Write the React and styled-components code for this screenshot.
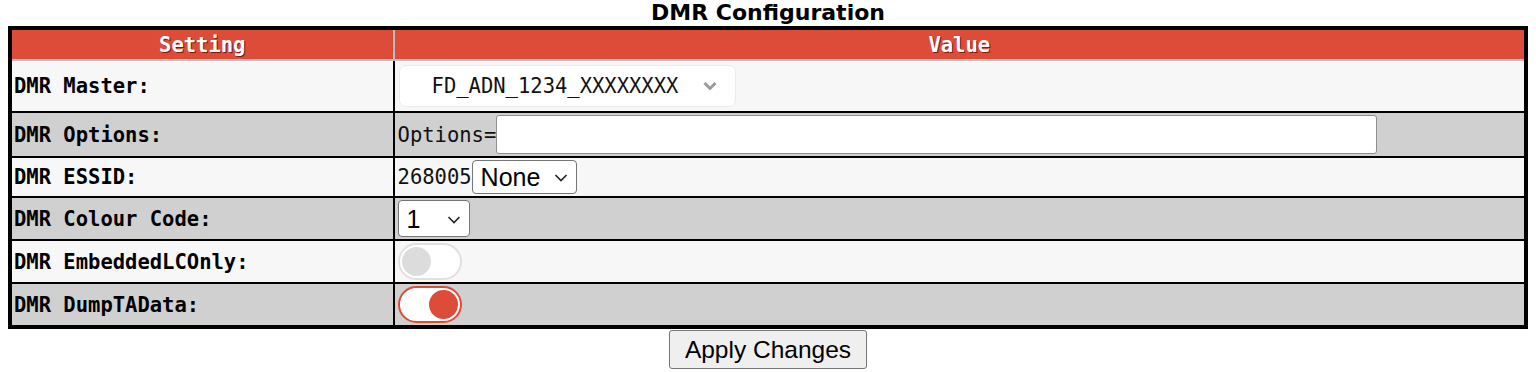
import React, { useState } from 'react';
import styled, { createGlobalStyle } from 'styled-components';

const GlobalStyle = createGlobalStyle`
  body {
    margin: 0 8px;
    background: #fff;
    font-family: "DejaVu Sans Mono", monospace;
  }
`;

const Title = styled.div`
  font-family: "DejaVu Sans", Verdana, sans-serif;
  font-weight: bold;
  font-size: 22px;
  line-height: 26px;
  text-align: center;
  color: #000;
`;

const Table = styled.table`
  width: 100%;
  border-collapse: collapse;
  border: 4px solid #000;
  font-size: 20.5px;
  line-height: 24px;
`;

const HeadCell = styled.th`
  background: #dd4b39;
  color: #fff;
  font-weight: bold;
  text-shadow: 1px 1px #7a1a10;
  border: 2px solid #c0c0c0;
  height: 29px;
  padding: 0;
  width: ${({ $w }) => $w || 'auto'};
`;

const Row = styled.tr`
  background: ${({ $dark }) => ($dark ? '#d0d0d0' : '#f7f7f7')};
`;

const Label = styled.td`
  border: 2px solid #000;
  font-weight: bold;
  padding: 0 2px;
  white-space: nowrap;
`;

const Value = styled.td`
  border: 2px solid #000;
  padding: 2px 2px 2px 3px;
  vertical-align: middle;
`;

const Inline = styled.div`
  display: flex;
  align-items: center;
`;

const FancySelect = styled.div`
  width: 337px;
  height: 42px;
  margin: 2px 0 2px 1px;
  box-sizing: border-box;
  background: #fff;
  border: 1px solid #ececec;
  border-radius: 7px;
  display: flex;
  align-items: center;
  padding-left: 32px;
  padding-right: 16px;
  justify-content: space-between;
  color: #111;
`;

const Chevron = styled.svg`
  width: 18px;
  height: 18px;
`;

const TextInput = styled.input`
  width: 881px;
  height: 39px;
  box-sizing: border-box;
  border: 1px solid #8f8f8f;
  border-radius: 3px;
  background: #fff;
  font-size: 18px;
  padding: 0 4px;
  margin: 0;
`;

const SelectWrap = styled.div`
  position: relative;
  display: inline-block;
  vertical-align: middle;
`;

const NativeSelect = styled.select`
  appearance: none;
  display: block;
  font-family: "Liberation Sans", Arial, sans-serif;
  font-size: 25px;
  height: ${({ $h }) => $h}px;
  width: ${({ $w }) => $w}px;
  border: 1px solid #767676;
  border-radius: 4px;
  background: #fff;
  color: #000;
  margin: 0;
  padding: 0 0 0 8px;
`;

const SelectArrow = styled.svg`
  position: absolute;
  right: 9px;
  top: 50%;
  width: 14px;
  height: 10px;
  margin-top: -4px;
  pointer-events: none;
`;

const Plain = styled.span`
  color: #111;
`;

const Switch = styled.label`
  display: block;
  position: relative;
  width: 64px;
  height: 37px;
  cursor: pointer;

  input {
    display: none;
  }
`;

const Track = styled.span`
  position: absolute;
  inset: 0;
  box-sizing: border-box;
  background: #fff;
  border-radius: 19px;
  border: 2px solid ${({ $on }) => ($on ? '#dd4b39' : '#e0e0e0')};

  &::after {
    content: '';
    position: absolute;
    top: 2px;
    left: ${({ $on }) => ($on ? '29px' : '2px')};
    width: 29px;
    height: 29px;
    border-radius: 50%;
    background: ${({ $on }) => ($on ? '#dd4b39' : '#dcdcdc')};
  }
`;

const Footer = styled.div`
  display: flex;
  justify-content: center;
  padding-top: 1px;
`;

const ApplyButton = styled.button`
  font-family: "Liberation Sans", Arial, sans-serif;
  font-size: 24.5px;
  height: 39px;
  padding: 0 15px;
  background: #efefef;
  border: 1px solid #767676;
  border-radius: 3px;
  color: #000;
`;

const Dropdown = ({ w, h, value, options }) => (
  <SelectWrap>
    <NativeSelect $w={w} $h={h} defaultValue={value}>
      {options.map((o) => (
        <option key={o}>{o}</option>
      ))}
    </NativeSelect>
    <SelectArrow viewBox="0 0 14 10">
      <path d="M1.5 2 L7 7.5 L12.5 2" fill="none" stroke="#222" strokeWidth="1.6" />
    </SelectArrow>
  </SelectWrap>
);

const Toggle = ({ on, onChange }) => (
  <Switch>
    <input type="checkbox" checked={on} onChange={onChange} />
    <Track $on={on} />
  </Switch>
);

export default function App() {
  const [embedded, setEmbedded] = useState(false);
  const [dump, setDump] = useState(true);

  return (
    <>
      <GlobalStyle />
      <Title>DMR Configuration</Title>
      <Table>
        <thead>
          <tr>
            <HeadCell $w="25.3%">Setting</HeadCell>
            <HeadCell>Value</HeadCell>
          </tr>
        </thead>
        <tbody>
          <Row>
            <Label>DMR Master:</Label>
            <Value>
              <FancySelect>
                <span>FD_ADN_1234_XXXXXXXX</span>
                <Chevron viewBox="0 0 18 18">
                  <path d="M3.5 6 L9 11.5 L14.5 6" fill="none" stroke="#9a9a9a" strokeWidth="3" />
                </Chevron>
              </FancySelect>
            </Value>
          </Row>
          <Row $dark>
            <Label>DMR Options:</Label>
            <Value>
              <Inline>
                <Plain>Options=</Plain>
                <TextInput type="text" defaultValue="" />
              </Inline>
            </Value>
          </Row>
          <Row>
            <Label>DMR ESSID:</Label>
            <Value>
              <Inline>
                <Plain>268005</Plain>
                <Dropdown w={105} h={34} value="None" options={['None', '01', '02', '03']} />
              </Inline>
            </Value>
          </Row>
          <Row $dark>
            <Label>DMR Colour Code:</Label>
            <Value>
              <Dropdown
                w={72}
                h={37}
                value="1"
                options={Array.from({ length: 16 }, (_, i) => String(i))}
              />
            </Value>
          </Row>
          <Row>
            <Label>DMR EmbeddedLCOnly:</Label>
            <Value>
              <Toggle on={embedded} onChange={() => setEmbedded(!embedded)} />
            </Value>
          </Row>
          <Row $dark>
            <Label>DMR DumpTAData:</Label>
            <Value>
              <Toggle on={dump} onChange={() => setDump(!dump)} />
            </Value>
          </Row>
        </tbody>
      </Table>
      <Footer>
        <ApplyButton>Apply Changes</ApplyButton>
      </Footer>
    </>
  );
}
